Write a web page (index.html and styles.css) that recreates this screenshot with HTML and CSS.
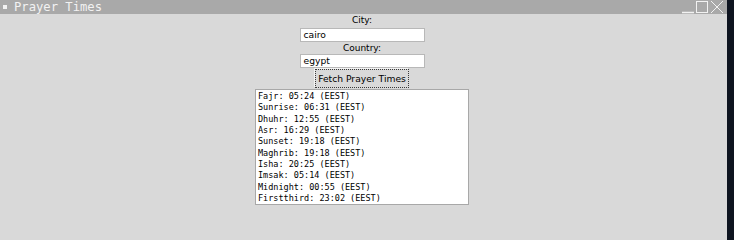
FILE: index.html
```html
<!DOCTYPE html>
<html>
<head>
<meta charset="utf-8">
<title>Prayer Times</title>
<link rel="stylesheet" href="styles.css">
</head>
<body>
<div class="window">
  <div class="titlebar">
    <span class="bullet"></span>
    <span class="title">Prayer Times</span>
    <div class="controls">
      <svg width="44" height="14" viewBox="0 0 44 14">
        <line x1="2" y1="12.5" x2="14" y2="12.5" stroke="#f2f2f2" stroke-width="1.5"/>
        <rect x="16.5" y="1.5" width="11" height="11" fill="none" stroke="#f2f2f2" stroke-width="1"/>
        <line x1="31" y1="1" x2="43" y2="13" stroke="#f2f2f2" stroke-width="1"/>
        <line x1="43" y1="1" x2="31" y2="13" stroke="#f2f2f2" stroke-width="1"/>
      </svg>
    </div>
  </div>
  <div class="content">
    <div class="label first">City:</div>
    <div class="entry">cairo</div>
    <div class="label second">Country:</div>
    <div class="entry">egypt</div>
    <div class="button">Fetch Prayer Times</div>
    <div class="listbox">
      <div>Fajr: 05:24 (EEST)</div>
      <div>Sunrise: 06:31 (EEST)</div>
      <div>Dhuhr: 12:55 (EEST)</div>
      <div>Asr: 16:29 (EEST)</div>
      <div>Sunset: 19:18 (EEST)</div>
      <div>Maghrib: 19:18 (EEST)</div>
      <div>Isha: 20:25 (EEST)</div>
      <div>Imsak: 05:14 (EEST)</div>
      <div>Midnight: 00:55 (EEST)</div>
      <div>Firstthird: 23:02 (EEST)</div>
    </div>
  </div>
</div>
</body>
</html>
```
FILE: styles.css
```css
html, body {
  margin: 0;
  padding: 0;
}
body {
  width: 734px;
  height: 240px;
  background: #0e1420;
  display: flex;
  overflow: hidden;
}
.window {
  width: 727px;
  height: 240px;
  background: #d9d9d9;
  display: flex;
  flex-direction: column;
}
.titlebar {
  height: 14px;
  flex: none;
  background: #a9a9a9;
  display: flex;
  align-items: center;
  color: #f2f2f2;
  font-family: "DejaVu Sans Mono", monospace;
  font-size: 12.2px;
  line-height: 14px;
}
.bullet {
  width: 4px;
  height: 4px;
  background: #f2f2f2;
  margin-left: 3px;
  margin-right: 7px;
}
.title {
  flex: 1;
}
.controls {
  display: flex;
  margin-right: 3px;
  align-self: flex-start;
}
.controls svg {
  display: block;
  margin-left: -3px;
}
.content {
  display: flex;
  flex-direction: column;
  align-items: center;
  padding-right: 3px;
  font-family: "DejaVu Sans", sans-serif;
  font-size: 9px;
  color: #000;
}
.label {
  line-height: 12px;
}
.label.first {
  height: 14px;
  line-height: 13px;
}
.label.second {
  height: 12px;
}
.entry {
  width: 118px;
  height: 12px;
  line-height: 12px;
  background: #fff;
  border: 1px solid #b8b8b8;
  padding: 0 2px 0 3px;
  font-size: 9.2px;
}
.button {
  width: 92px;
  height: 17px;
  margin-top: 1px;
  border: 1px dotted #3a3a3a;
  box-shadow: -1px -1px 0 #f4f4f4;
  line-height: 17px;
  text-align: center;
  font-size: 9.2px;
}
.listbox {
  width: 208px;
  height: 111px;
  margin-top: 1px;
  background: #fff;
  border: 1px solid #a8a8a8;
  padding: 1px 2px 2px 2px;
  font-family: "DejaVu Sans Mono", monospace;
  font-size: 8.5px;
  line-height: 11.33px;
}
```
